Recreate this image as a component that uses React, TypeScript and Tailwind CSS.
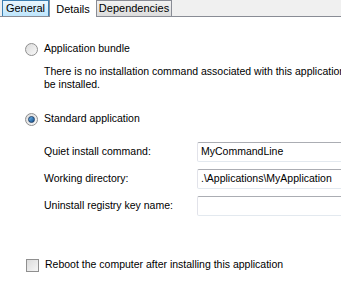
import React from 'react';

function Radio({ checked }: { checked?: boolean }) {
  return (
    <span className="w-[13px] h-[13px] rounded-full border border-[#8f8f8f] bg-gradient-to-br from-[#dcdcdc] to-[#f8f8f8] flex items-center justify-center shrink-0">
      {checked && (
        <span className="w-[7px] h-[7px] rounded-full bg-gradient-to-br from-[#6fb8f0] to-[#0f4f8c] border border-[#1f3f68]" />
      )}
    </span>
  );
}

function Field({ label, value }: { label: string; value: string }) {
  return (
    <div className="flex items-center h-[20px]">
      <span className="w-[153px] shrink-0">{label}</span>
      <div className="flex-1 h-[20px] border border-[#abadb3] border-r-0 border-b-[#e3e9ef] border-l-[#e2e3ea] rounded-l-[2px] bg-white pl-[3px] flex items-center -mr-[4px]">
        {value}
      </div>
    </div>
  );
}

export default function App() {
  return (
    <div
      className="w-[341px] h-[281px] bg-white text-black text-[10.5px] overflow-hidden flex flex-col"
      style={{ fontFamily: '"Liberation Sans", Arial, sans-serif' }}
    >
      {/* Tab strip */}
      <div className="flex items-end h-[17px] bg-[#f0f0f0] border-b border-[#898c95] shrink-0 text-[11px]">
        <div className="ml-[2px] h-[16px] w-[47px] border border-b-0 border-[#3c7fb1] bg-gradient-to-b from-[#eaf6fd] to-[#bee6fd] flex items-center justify-center">
          General
        </div>
        <div className="h-[18px] -mb-px w-[48px] border border-b-0 border-[#898c95] bg-white flex items-start justify-center pt-[1px] z-10">
          Details
        </div>
        <div className="h-[16px] w-[75px] border border-b-0 border-l-0 border-[#898c95] bg-gradient-to-b from-[#f2f2f2] to-[#dcdcdc] flex items-center justify-center">
          Dependencies
        </div>
      </div>

      {/* Content */}
      <div className="flex flex-col pl-[25px] pt-[25px]">
        <div className="flex items-center gap-[6px] h-[14px]">
          <Radio />
          <span>Application bundle</span>
        </div>
        <div className="pl-[19px] pt-[9px] leading-[13px] whitespace-nowrap">
          There is no installation command associated with this application
          <br />
          be installed.
        </div>

        <div className="flex items-center gap-[6px] h-[14px] mt-[21px]">
          <Radio checked />
          <span>Standard application</span>
        </div>

        <div className="flex flex-col gap-[7px] pl-[19px] mt-[16px]">
          <Field label="Quiet install command:" value="MyCommandLine" />
          <Field label="Working directory:" value=".\Applications\MyApplication" />
          <Field label="Uninstall registry key name:" value="" />
        </div>

        <div className="flex items-center gap-[6px] h-[14px] mt-[42px] pl-[1px]">
          <span className="w-[13px] h-[13px] border border-[#8f8f8f] bg-gradient-to-br from-[#dcdcdc] to-[#f6f6f6] shrink-0" />
          <span>Reboot the computer after installing this application</span>
        </div>
      </div>
    </div>
  );
}
